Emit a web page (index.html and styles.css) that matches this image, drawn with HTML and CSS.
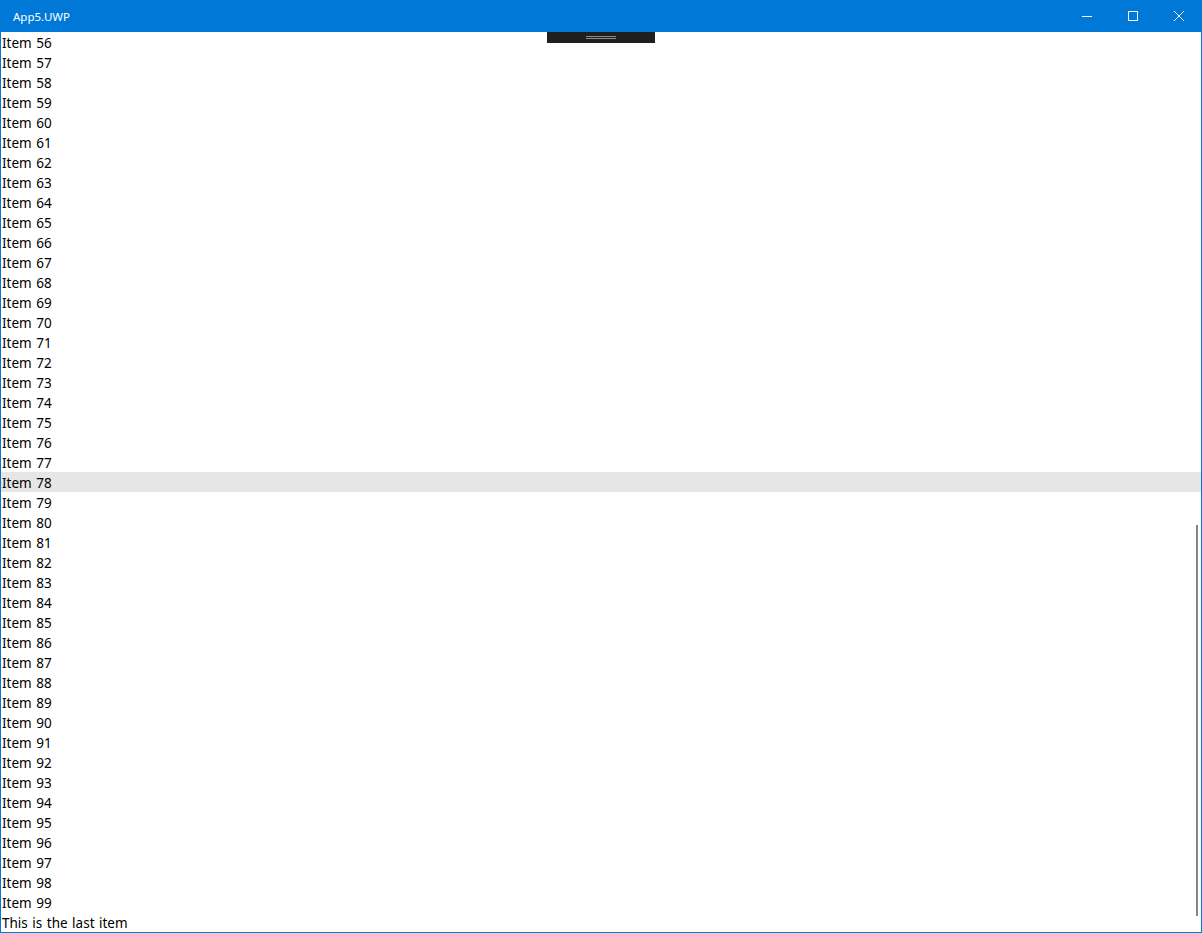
FILE: index.html
```html
<!DOCTYPE html>
<html>
<head>
<meta charset="utf-8">
<link rel="stylesheet" href="styles.css">
</head>
<body>
<div class="window">
  <div class="titlebar">
    <span class="title">App5.UWP</span>
    <div class="caption">
      <div class="cbtn"><svg width="10" height="10" viewBox="0 0 10 10"><path d="M0 5.5H10" stroke="#fff" stroke-width="1"/></svg></div>
      <div class="cbtn"><svg width="10" height="10" viewBox="0 0 10 10"><rect x="0.5" y="0.5" width="9" height="9" fill="none" stroke="#fff" stroke-width="1"/></svg></div>
      <div class="cbtn"><svg width="10" height="10" viewBox="0 0 10 10"><path d="M0 0L10 10M10 0L0 10" stroke="#fff" stroke-width="1"/></svg></div>
    </div>
  </div>
  <div class="content">
    <div class="list" id="list">
      <div class="row">Item 56</div>
      <div class="row">Item 57</div>
      <div class="row">Item 58</div>
      <div class="row">Item 59</div>
      <div class="row">Item 60</div>
      <div class="row">Item 61</div>
      <div class="row">Item 62</div>
      <div class="row">Item 63</div>
      <div class="row">Item 64</div>
      <div class="row">Item 65</div>
      <div class="row">Item 66</div>
      <div class="row">Item 67</div>
      <div class="row">Item 68</div>
      <div class="row">Item 69</div>
      <div class="row">Item 70</div>
      <div class="row">Item 71</div>
      <div class="row">Item 72</div>
      <div class="row">Item 73</div>
      <div class="row">Item 74</div>
      <div class="row">Item 75</div>
      <div class="row">Item 76</div>
      <div class="row">Item 77</div>
      <div class="row hover">Item 78</div>
      <div class="row">Item 79</div>
      <div class="row">Item 80</div>
      <div class="row">Item 81</div>
      <div class="row">Item 82</div>
      <div class="row">Item 83</div>
      <div class="row">Item 84</div>
      <div class="row">Item 85</div>
      <div class="row">Item 86</div>
      <div class="row">Item 87</div>
      <div class="row">Item 88</div>
      <div class="row">Item 89</div>
      <div class="row">Item 90</div>
      <div class="row">Item 91</div>
      <div class="row">Item 92</div>
      <div class="row">Item 93</div>
      <div class="row">Item 94</div>
      <div class="row">Item 95</div>
      <div class="row">Item 96</div>
      <div class="row">Item 97</div>
      <div class="row">Item 98</div>
      <div class="row">Item 99</div>
      <div class="row">This is the last item</div>
    </div>
    <div class="scrollthumb"></div>
    <div class="dragbar"><span class="grip"></span><span class="grip"></span></div>
  </div>
</div>
</body>
</html>
```
FILE: styles.css
```css
html, body {
  margin: 0;
  padding: 0;
  background: #ffffff;
}
.window {
  width: 1202px;
  height: 933px;
  box-sizing: border-box;
  display: flex;
  flex-direction: column;
  font-family: "Noto Sans", "Open Sans", sans-serif;
}
.titlebar {
  height: 32px;
  flex: none;
  background: #0078d7;
  display: flex;
  align-items: center;
  color: #ffffff;
}
.title {
  font-size: 11.5px;
  padding-left: 13px;
  flex: 1;
}
.caption {
  display: flex;
  height: 32px;
}
.cbtn {
  width: 46px;
  height: 32px;
  display: flex;
  align-items: center;
  justify-content: center;
}
.content {
  position: relative;
  flex: 1;
  border: 1px solid #0078d7;
  border-top: none;
  overflow: hidden;
}
.list {
  display: flex;
  flex-direction: column;
}
.row {
  height: 20px;
  box-sizing: border-box;
  padding-top: 2px;
  line-height: 18px;
  font-size: 13.5px;
  word-spacing: 1px;
  color: #000000;
  padding-left: 1px;
  white-space: nowrap;
}
.row.hover {
  background: #e6e6e6;
}
.scrollthumb {
  position: absolute;
  right: 3px;
  top: 493px;
  width: 2px;
  height: 391px;
  background: #858585;
}
.dragbar {
  position: absolute;
  left: 546px;
  top: 0;
  width: 108px;
  height: 11px;
  background: #1f1f1f;
  display: flex;
  flex-direction: column;
  align-items: center;
  padding-top: 4px;
  box-sizing: border-box;
  gap: 1px;
}
.grip {
  display: block;
  width: 30px;
  height: 1px;
  background: #8a8a8a;
}
```
